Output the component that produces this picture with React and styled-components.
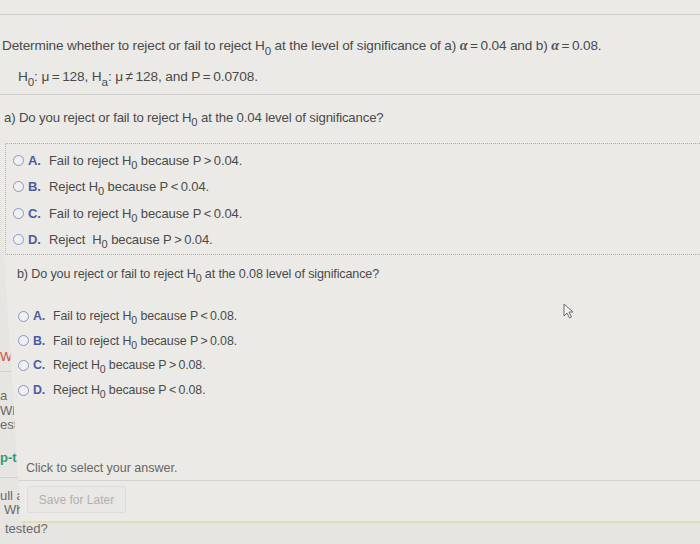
import React from "react";
import styled, { createGlobalStyle } from "styled-components";

const GlobalStyle = createGlobalStyle`
  html, body { margin: 0; padding: 0; }
  body {
    background: #e6e5e2;
    font-family: "Liberation Sans", Arial, sans-serif;
    color: #444;
  }
`;

const Screen = styled.div`
  position: relative;
  width: 700px;
  height: 544px;
  overflow: hidden;
  background: #e6e5e2;
`;

/* underlying page, visible at the lower-left edge */
const Backdrop = styled.div`
  display: flex;
  flex-direction: column;
  padding-top: 350px;
  font-size: 13px;
  line-height: 14px;
  color: #6a6a6a;
`;

const BackLine = styled.div`
  height: ${(p) => p.$h || 14}px;
  color: ${(p) => p.$color || "#6a6a6a"};
  font-weight: ${(p) => (p.$bold ? 700 : 400)};
  margin-top: ${(p) => p.$mt || 0}px;
  padding-left: ${(p) => p.$pl || 0}px;
  white-space: nowrap;
`;

const BackRule = styled.div`
  height: 1px;
  background: #d2d2d0;
  margin-top: ${(p) => p.$mt || 0}px;
`;

const Dialog = styled.div`
  position: absolute;
  top: 0;
  left: 0;
  right: 0;
  height: 521px;
  background: #ebeae7;
  border-bottom: 2px solid #e4dcb4;
  clip-path: polygon(0 0, 100% 0, 100% 100%, 21px 100%, 0 190px);
  display: flex;
  flex-direction: column;
`;

const Question = styled.section`
  margin-top: 14px;
  border-top: 1px solid #cfcfcd;
  padding: 21px 0 0 2px;
  font-size: 13.6px;
  line-height: 18px;
  color: #4a4a4a;
  letter-spacing: -0.15px;
  white-space: nowrap;
`;

const Hypothesis = styled.div`
  margin-top: 13px;
  padding-left: 18px;
  font-size: 13.7px;
  line-height: 18px;
  color: #4a4a4a;
  letter-spacing: -0.15px;
`;

const Rule = styled.div`
  height: 1px;
  background: #cdcdcb;
  margin-top: ${(p) => p.$mt || 0}px;
`;

const PartPrompt = styled.div`
  margin-top: ${(p) => p.$mt}px;
  padding-left: ${(p) => p.$pl}px;
  font-size: ${(p) => p.$fs}px;
  line-height: 18px;
  color: #4a4a4a;
  letter-spacing: -0.15px;
  white-space: nowrap;
`;

const OptionsBox = styled.div`
  margin: 16px 0 0 5px;
  border-top: 1px dotted #a9a9a9;
  border-left: 1px dotted #b5b5b5;
  border-bottom: 1px dotted #a9a9a9;
  padding: 3px 0 1px 0;
  display: flex;
  flex-direction: column;
`;

const OptionsList = styled.div`
  margin-top: ${(p) => p.$mt}px;
  display: flex;
  flex-direction: column;
`;

const Option = styled.label`
  display: flex;
  align-items: center;
  height: ${(p) => p.$h}px;
  padding-left: ${(p) => p.$pl}px;
  font-size: ${(p) => p.$fs}px;
  color: #4a4a4a;
  letter-spacing: -0.1px;
  white-space: nowrap;
`;

const Radio = styled.span`
  width: 9px;
  height: 9px;
  border: 1.5px solid #8a93c8;
  border-radius: 50%;
  background: #f1f1f3;
  flex: none;
`;

const Letter = styled.span`
  margin-left: 4px;
  width: ${(p) => p.$w}px;
  font-weight: 700;
  color: #4b5ba6;
  flex: none;
`;

const OptionText = styled.span`
  white-space: pre;
`;

const Sub = styled.span`
  font-size: 0.85em;
  vertical-align: -0.4em;
  line-height: 0;
`;

const Alpha = styled.span`
  font-family: "Liberation Serif", "Times New Roman", serif;
  font-style: italic;
  font-weight: 700;
  font-size: 1.05em;
  color: #555;
`;

const Hint = styled.div`
  margin-top: auto;
  padding: 0 0 4px 26px;
  font-size: 12.5px;
  line-height: 16px;
  color: #666;
`;

const Footer = styled.div`
  border-top: 1px solid #d3d3d1;
  padding: 5px 0 0 27px;
  height: 41px;
  box-sizing: border-box;
`;

const LaterButton = styled.button`
  width: 99px;
  height: 27px;
  border: 1px solid #dedddb;
  border-radius: 2px;
  background: #e9e8e5;
  color: #b0b0b0;
  font-family: "Liberation Sans", Arial, sans-serif;
  font-size: 12px;
  padding: 0;
`;

const Cursor = styled.svg`
  position: absolute;
  left: 563px;
  top: 303px;
`;

const H = ({ s = "0" }) => (
  <>
    H<Sub>{s}</Sub>
  </>
);

const T = "\u2009";

const partA = [
  ["A.", <>Fail to reject <H /> because P{T}&gt;{T}0.04.</>],
  ["B.", <>Reject <H /> because P{T}&lt;{T}0.04.</>],
  ["C.", <>Fail to reject <H /> because P{T}&lt;{T}0.04.</>],
  ["D.", <>Reject  <H /> because P{T}&gt;{T}0.04.</>],
];

const partB = [
  ["A.", <>Fail to reject <H /> because P{T}&lt;{T}0.08.</>],
  ["B.", <>Fail to reject <H /> because P{T}&gt;{T}0.08.</>],
  ["C.", <>Reject <H /> because P{T}&gt;{T}0.08.</>],
  ["D.", <>Reject <H /> because P{T}&lt;{T}0.08.</>],
];

export default function App() {
  return (
    <>
      <GlobalStyle />
      <Screen>
        <Backdrop>
          <BackLine $color="#cf4b3c">What</BackLine>
          <BackRule $mt={7} />
          <BackLine $mt={17}>a</BackLine>
          <BackLine $mt={1}>What</BackLine>
          <BackLine $mt={0}>est</BackLine>
          <BackLine $mt={19} $color="#2f9a7c" $bold>p-t</BackLine>
          <BackRule $mt={12} />
          <BackLine $mt={11}>ull a</BackLine>
          <BackLine $pl={4}>What</BackLine>
          <BackLine $mt={5} $pl={5}>tested?</BackLine>
        </Backdrop>

        <Dialog>
          <Question>
            Determine whether to reject or fail to reject <H /> at the level of
            significance of a) <Alpha>α</Alpha>{T}={T}0.04 and b){" "}
            <Alpha>α</Alpha>{T}={T}0.08.
          </Question>
          <Hypothesis>
            <H />: μ{T}={T}128, <H s="a" />: μ{T}≠{T}128, and P{T}={T}0.0708.
          </Hypothesis>
          <Rule $mt={8} />
          <PartPrompt $mt={14} $pl={4} $fs={13.2}>
            a) Do you reject or fail to reject <H /> at the 0.04 level of significance?
          </PartPrompt>
          <OptionsBox>
            {partA.map(([l, t]) => (
              <Option key={l} $h={26.5} $pl={7} $fs={13}>
                <Radio />
                <Letter $w={21}>{l}</Letter>
                <OptionText>{t}</OptionText>
              </Option>
            ))}
          </OptionsBox>
          <PartPrompt $mt={10} $pl={17} $fs={12.6}>
            b) Do you reject or fail to reject <H /> at the 0.08 level of significance?
          </PartPrompt>
          <OptionsList $mt={21}>
            {partB.map(([l, t]) => (
              <Option key={l} $h={24.6} $pl={18} $fs={12.4}>
                <Radio />
                <Letter $w={20}>{l}</Letter>
                <OptionText>{t}</OptionText>
              </Option>
            ))}
          </OptionsList>
          <Hint>Click to select your answer.</Hint>
          <Footer>
            <LaterButton type="button">Save for Later</LaterButton>
          </Footer>
        </Dialog>

        <Cursor width="11" height="16" viewBox="0 0 11 16">
          <path
            d="M1 1 L1 13 L4 10 L6.5 15 L8.5 14 L6 9 L10 9 Z"
            fill="#f4f4f4"
            stroke="#6a6a6a"
            strokeWidth="1"
            strokeLinejoin="round"
          />
        </Cursor>
      </Screen>
    </>
  );
}
